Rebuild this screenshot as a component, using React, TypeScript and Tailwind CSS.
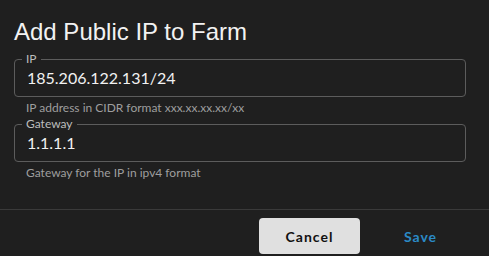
import React from 'react';

const Field: React.FC<{ label: string; value: string; helper: string; className?: string }> = ({ label, value, helper, className }) => (
  <div className={className}>
    <div className="relative h-[38px] rounded-[4px] border border-[#5c5c5c] pl-[12px]">
      <span className="absolute left-[7px] top-[-8px] bg-[#1f1f1f] px-[4px] text-[12px] leading-[14px] text-[#bdbdbd]">
        {label}
      </span>
      <div className="text-[16px] leading-[36px] text-[#f2f2f2]">{value}</div>
    </div>
    <p className="mt-[3px] pl-[12px] text-[12px] leading-[16px] text-[#9e9e9e]">{helper}</p>
  </div>
);

export default function App() {
  return (
    <div className="h-[256px] w-[489px] overflow-hidden bg-[#1f1f1f] font-['Lato','Noto_Sans',sans-serif]">
      <h2 className="pl-[14px] pt-[20px] font-['Liberation_Sans',Arial,sans-serif] text-[24px] leading-[24px] text-[#f2f2f2]">
        Add Public IP to Farm
      </h2>

      <div className="ml-[14px] mt-[15px] w-[452px]">
        <Field label="IP" value="185.206.122.131/24" helper="IP address in CIDR format xxx.xx.xx.xx/xx" />
        <Field className="mt-[8px]" label="Gateway" value="1.1.1.1" helper="Gateway for the IP in ipv4 format" />
      </div>

      <div className="mt-[28px] h-px bg-[#3a3a3a]" />

      <div className="mt-[8px] flex justify-end gap-[10px] pr-[18px]">
        <button className="h-[36px] w-[101px] rounded-[4px] bg-[#e0e0e0] text-[14px] font-bold tracking-[1px] text-[#111]">
          Cancel
        </button>
        <button className="h-[36px] w-[101px] text-[14px] font-bold tracking-[1px] text-[#2b8ac6]">
          Save
        </button>
      </div>
    </div>
  );
}
